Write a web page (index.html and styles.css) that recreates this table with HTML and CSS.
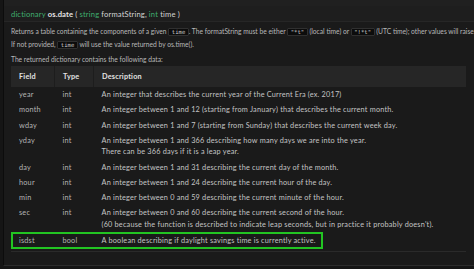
FILE: index.html
```html
<!DOCTYPE html>
<html>
<head>
<meta charset="utf-8">
<link rel="stylesheet" href="styles.css">
</head>
<body>
<div class="doc">
  <div class="sig">
    <span class="kw">dictionary</span> <b class="fn">os.date</b> ( <span class="kw">string</span> formatString, <span class="kw">int</span> time )
  </div>
  <div class="body">
    <p class="line">Returns a table containing the components of a given <code>time</code>. The formatString must be either <code>"*t"</code> (local time) or <code>"!*t"</code> (UTC time); other values will raise</p>
    <p class="line">If not provided, <code>time</code> will use the value returned by os.time().</p>
    <p class="line gap">The returned dictionary contains the following data:</p>
    <table class="fields">
      <thead>
        <tr><th class="c1">Field</th><th class="c2">Type</th><th>Description</th></tr>
      </thead>
      <tbody>
        <tr><td>year</td><td>int</td><td>An integer that describes the current year of the Current Era (ex. 2017)</td></tr>
        <tr><td>month</td><td>int</td><td>An integer between 1 and 12 (starting from January) that describes the current month.</td></tr>
        <tr><td>wday</td><td>int</td><td>An integer between 1 and 7 (starting from Sunday) that describes the current week day.</td></tr>
        <tr><td>yday</td><td>int</td><td>An integer between 1 and 366 describing how many days we are into the year.<br>There can be 366 days if it is a leap year.</td></tr>
        <tr><td>day</td><td>int</td><td>An integer between 1 and 31 describing the current day of the month.</td></tr>
        <tr><td>hour</td><td>int</td><td>An integer between 1 and 24 describing the current hour of the day.</td></tr>
        <tr><td>min</td><td>int</td><td>An integer between 0 and 59 describing the current minute of the hour.</td></tr>
        <tr><td>sec</td><td>int</td><td>An integer between 0 and 60 describing the current second of the hour.<br>(60 because the function is described to indicate leap seconds, but in practice it probably doesn't).</td></tr>
        <tr class="hl"><td><span class="mark"></span>isdst</td><td>bool</td><td>A boolean describing if daylight savings time is currently active.</td></tr>
      </tbody>
    </table>
  </div>
</div>
</body>
</html>
```
FILE: styles.css
```css
html, body {
  margin: 0;
  padding: 0;
  background: #151515;
}

body {
  width: 474px;
  height: 269px;
  overflow: hidden;
  font-family: Lato, "Open Sans", sans-serif;
  color: #bdbdbd;
}

.doc {
  margin-left: 3px;
  border-left: 1px solid #0c0c0c;
  background: #1a1a1a;
  height: 265px;
  border-bottom: 1px solid #2c2c2c;
}

.sig {
  height: 22px;
  box-sizing: border-box;
  padding: 4px 0 0 7px;
  background: #1e1e1e;
  border-top: 6px solid #202020;
  border-bottom: 1px solid #262626;
  font-size: 7.6px;
  line-height: 8px;
  letter-spacing: 0.15px;
  color: #d4d4d4;
  white-space: nowrap;
}

.kw {
  color: #3fae6e;
}

.fn {
  color: #e6e6e6;
  font-weight: 700;
}

.body {
  padding: 3px 0 0 7px;
}

.line {
  margin: 0;
  font-size: 6.7px;
  line-height: 12px;
  white-space: nowrap;
  color: #b8b8b8;
}

.line.gap {
  margin-top: 2px;
}

code {
  font-family: "DejaVu Sans Mono", monospace;
  font-size: 5.6px;
  color: #cfcfcf;
  background: #0c0c0c;
  border: 1px solid #303030;
  border-radius: 1px;
  padding: 0 2.5px;
}

.fields {
  margin-top: 1px;
  width: 455px;
  border-collapse: collapse;
  font-size: 7.3px;
  letter-spacing: 0.2px;
}

.fields th {
  background: #262626;
  color: #e2e2e2;
  font-weight: 700;
  text-align: left;
  height: 21px;
  padding: 0 8px;
  border-left: 1px solid #1d1d1d;
}

.fields th:first-child {
  border-left: none;
}

.fields .c1 {
  width: 27px;
}

.fields .c2 {
  width: 22px;
}

.fields td {
  padding: 2px 8px 1.75px;
  line-height: 11.5px;
  vertical-align: top;
  white-space: nowrap;
  color: #b4b4b4;
}

.fields td:nth-child(3) {
  color: #c4c4c4;
}

.fields tbody tr:last-child td {
  border-bottom: 1px solid #2a2a2a;
  padding-top: 3px;
  padding-bottom: 4px;
}

.hl td:first-child {
  position: relative;
}

.mark {
  position: absolute;
  left: 0;
  top: 0;
  width: 312px;
  height: 17px;
  border: 2px solid #22c422;
  box-sizing: border-box;
}
```
